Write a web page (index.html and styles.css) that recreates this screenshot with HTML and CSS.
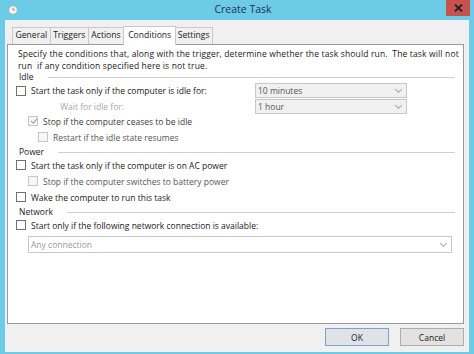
FILE: index.html
```html
<!DOCTYPE html>
<html lang="en">
<head>
  <meta charset="UTF-8">
  <title>Create Task</title>
  <link rel="stylesheet" href="styles.css">
</head>
<body>
  <div class="window">
    <!-- Barra de titulo -->
    <div class="titlebar">
      <svg class="app-icon" width="10" height="10" viewBox="0 0 10 10">
        <circle cx="5" cy="5" r="4.3" fill="#f4f4f4" stroke="#9aa" stroke-width="0.8"/>
        <path d="M5 2.6V5H6.8" fill="none" stroke="#777" stroke-width="0.8"/>
      </svg>
      <div class="title">Create Task</div>
      <div class="close">
        <svg width="9" height="8" viewBox="0 0 9 8">
          <path d="M1 0.5L8 7.5M8 0.5L1 7.5" stroke="#222" stroke-width="1.8"/>
        </svg>
      </div>
    </div>

    <div class="client">
      <!-- Pestanas -->
      <div class="tabs">
        <div class="tab">General</div>
        <div class="tab">Triggers</div>
        <div class="tab">Actions</div>
        <div class="tab selected">Conditions</div>
        <div class="tab">Settings</div>
      </div>

      <!-- Panel -->
      <div class="panel">
        <p class="intro">Specify the conditions that, along with the trigger, determine whether the task should run.&nbsp; The task will not<br>run&nbsp; if any condition specified here is not true.</p>

        <div class="group">Idle</div>
        <div class="row tall">
          <span class="check"></span>
          <span class="label">Start the task only if the computer is idle for:</span>
          <div class="select small"><span>10 minutes</span><span class="chev"></span></div>
        </div>
        <div class="row short">
          <span class="label wait">Wait for idle for:</span>
          <div class="select small"><span>1 hour</span><span class="chev"></span></div>
        </div>
        <div class="row indent1">
          <span class="check disabled checked"></span>
          <span class="label">Stop if the computer ceases to be idle</span>
        </div>
        <div class="row indent2">
          <span class="check disabled"></span>
          <span class="label">Restart if the idle state resumes</span>
        </div>

        <div class="group">Power</div>
        <div class="row">
          <span class="check"></span>
          <span class="label">Start the task only if the computer is on AC power</span>
        </div>
        <div class="row indent1">
          <span class="check disabled"></span>
          <span class="label">Stop if the computer switches to battery power</span>
        </div>
        <div class="row">
          <span class="check"></span>
          <span class="label">Wake the computer to run this task</span>
        </div>

        <div class="group">Network</div>
        <div class="row">
          <span class="check"></span>
          <span class="label">Start only if the following network connection is available:</span>
        </div>
        <div class="select wide"><span>Any connection</span><span class="chev"></span></div>
      </div>

      <!-- Botones -->
      <div class="buttons">
        <button class="btn default">OK</button>
        <button class="btn">Cancel</button>
      </div>
    </div>
  </div>
</body>
</html>
```

FILE: styles.css
```css
body {
  margin: 0;
  background: #6ccbe7;
  font-family: "Open Sans", "Noto Sans", sans-serif;
  font-size: 8.5px;
  color: #1a1a1a;
}

.window {
  width: 474px;
  height: 354px;
  display: flex;
  flex-direction: column;
}

/* Barra de titulo */
.titlebar {
  height: 20px;
  display: flex;
  align-items: center;
  padding-left: 6px;
}

.app-icon {
  flex: none;
  margin-left: 2px;
}

.title {
  flex: 1;
  text-align: center;
  font-size: 10.5px;
  color: #1c3250;
  padding-left: 22px;
  margin-top: -3px;
}

.close {
  align-self: flex-start;
  width: 24px;
  height: 16px;
  margin-right: 4px;
  background: #c7524b;
  display: flex;
  justify-content: center;
  align-items: center;
}

/* Area cliente */
.client {
  flex: 1;
  margin: 0 5px 2px 5px;
  background: #f0f0f0;
  padding: 6px 5px 0 2px;
  display: flex;
  flex-direction: column;
}

.tabs {
  display: flex;
  align-items: flex-end;
  height: 18px;
  padding-left: 5px;
  position: relative;
  z-index: 1;
}

.tab {
  height: 16px;
  line-height: 15px;
  padding: 0 2.5px;
  border: 1px solid #c9c9c9;
  border-bottom: none;
  border-right: none;
  background: #f0f0f0;
  font-size: 8.6px;
}

.tab:last-child {
  border-right: 1px solid #c9c9c9;
}

.tab.selected {
  height: 18px;
  line-height: 16px;
  background: #fff;
  padding: 0 4px;
  margin: 0 -1px 0 0;
  border-right: 1px solid #c9c9c9;
  position: relative;
  top: 1px;
}

.tab.selected + .tab {
  border-left: none;
}

.panel {
  height: 280px;
  background: #fff;
  border: 1px solid #9a9a9a;
  padding: 3px 8px 0 8px;
  box-sizing: border-box;
}

.intro {
  margin: 0 0 0 2px;
  line-height: 12px;
  white-space: nowrap;
  letter-spacing: 0.15px;
}

.group {
  display: flex;
  align-items: center;
  line-height: 10px;
  margin-top: 2px;
  padding-left: 3px;
}

.intro + .group {
  margin-top: 0;
}

.group::after {
  content: '';
  flex: 1;
  height: 1px;
  background: #cfcfcf;
  margin-left: 14px;
  margin-top: 1px;
}

.row {
  display: flex;
  align-items: center;
  height: 16px;
}

.row.tall {
  height: 17px;
}

.row.short {
  height: 15px;
  margin-bottom: -1px;
}

.check {
  width: 8px;
  height: 8px;
  border: 1px solid #707070;
  background: #fff;
  flex: none;
  margin-right: 5px;
  position: relative;
}

.check.disabled {
  border-color: #c6c6c6;
  background: #f7f7f7;
}

.check.checked::after {
  content: '';
  position: absolute;
  left: 2.5px;
  top: 0;
  width: 2.5px;
  height: 5px;
  border: solid #9a9a9a;
  border-width: 0 1px 1px 0;
  transform: rotate(40deg);
}

.indent1 {
  padding-left: 12px;
}

.indent2 {
  padding-left: 22px;
}

.indent1 .label,
.indent2 .label {
  color: #3a3a3a;
}

.row:has(.check.disabled:not(.checked)) .label {
  color: #555;
}

.wait {
  color: #a8a8a8;
  width: 108px;
  text-align: right;
}

.select {
  height: 15px;
  border: 1px solid #c7c7c7;
  background: #f0f0f0;
  color: #8c8c8c;
  display: flex;
  align-items: center;
  justify-content: space-between;
  padding: 0 3px 0 2px;
  box-sizing: border-box;
}

.select.small {
  width: 152px;
  margin-left: auto;
  margin-right: 48px;
  color: #555;
}

.select.wide {
  width: 424px;
  height: 17px;
  margin: 3px 0 0 12px;
  background: #fff;
  color: #999;
}

.chev {
  width: 4px;
  height: 4px;
  border: solid #aaa;
  border-width: 0 1px 1px 0;
  transform: rotate(45deg);
  margin: 0 2px 3px 0;
}

/* Botones */
.buttons {
  display: flex;
  justify-content: flex-end;
  gap: 11px;
  padding: 4px 0 0 0;
}

.btn {
  width: 64px;
  height: 18px;
  font-family: inherit;
  font-size: 8.5px;
  color: #1a1a1a;
  background: #e2e2e2;
  border: 1px solid #adadad;
  padding: 0;
}

.btn.default {
  border-color: #7da2ce;
  background: #dfe3e8;
}
```
